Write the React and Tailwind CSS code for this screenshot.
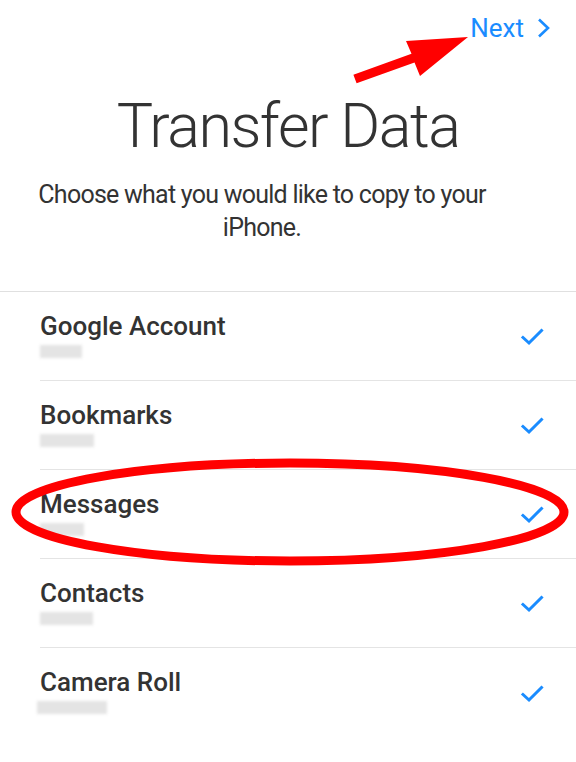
import React from 'react';

const items = [
  { title: 'Google Account', blob: 'w-[42px]' },
  { title: 'Bookmarks', blob: 'w-[54px]' },
  { title: 'Messages', blob: 'w-[44px]' },
  { title: 'Contacts', blob: 'w-[53px]' },
  { title: 'Camera Roll', blob: 'w-[70px] -ml-[3px]' },
];

const Check = () => (
  <svg width="24" height="24" viewBox="0 0 24 24" fill="none">
    <path d="M3 13.5 L9 19 L21.5 6.5" stroke="#1a8cff" strokeWidth="3" strokeLinecap="square" />
  </svg>
);

const App = () => {
  return (
    <div className="relative w-[576px] h-[762px] bg-white overflow-hidden font-['Roboto',sans-serif] text-[#333]">
      {/* header */}
      <div className="flex justify-end pt-[13px] pr-[26px]">
        <button className="flex items-center gap-[13px] text-[#1a8cff] text-[26px] leading-[30px]">
          Next
          <svg width="13" height="20" viewBox="0 0 13 20" fill="none">
            <path d="M2 1.5 L11 10 L2 18.5" stroke="#1a8cff" strokeWidth="2.6" />
          </svg>
        </button>
      </div>

      <h1 className="mt-[52px] text-center text-[61px] leading-[62px] font-light tracking-[-1.5px]">
        Transfer Data
      </h1>
      <p className="mt-[21px] pl-[36px] pr-[88px] text-center text-[25px] leading-[33px] tracking-[-0.75px]">
        Choose what you would like to copy to your iPhone.
      </p>

      <div className="mt-[47px] border-t border-[#e0e0e0]">
        {items.map((item, i) => (
          <div
            key={item.title}
            className={`ml-[40px] h-[89px] flex items-center justify-between pr-[32px] ${
              i < items.length - 1 ? 'border-b border-[#e4e4e4]' : ''
            }`}
          >
            <div className="self-start pt-[19px]">
              <div className="text-[26px] leading-[30px] font-medium">{item.title}</div>
              <div className={`mt-[4px] h-[13px] bg-[#e4e4e4] blur-[1.5px] ${item.blob}`} />
            </div>
            <Check />
          </div>
        ))}
      </div>

      {/* annotations */}
      <svg className="absolute inset-0 pointer-events-none" width="576" height="762" viewBox="0 0 576 762">
        <polygon
          points="353.4,74.8 411.5,53.7 406,41 468,37 420,76 414.5,62.5 356.6,83.2"
          fill="#ff0000"
        />
        <ellipse cx="290" cy="512" rx="274" ry="49" fill="none" stroke="#ff0000" strokeWidth="9" />
      </svg>
    </div>
  );
};

export default App;
